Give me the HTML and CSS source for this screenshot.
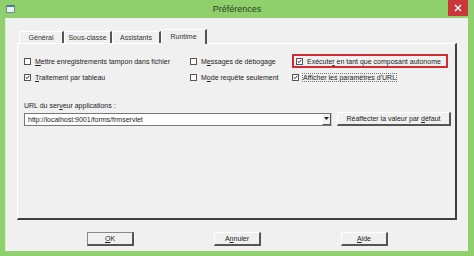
FILE: index.html
```html
<!DOCTYPE html>
<html lang="fr">

<head>
    <meta charset="UTF-8">
    <title>Préférences</title>
    <link rel="stylesheet" href="styles.css">
</head>

<body>

    <div class="window">
        <!-- Title bar -->
        <div class="titlebar">
            <div class="app-icon"></div>
            <div class="title">Préférences</div>
            <div class="close">
                <svg width="8" height="8" viewBox="0 0 8 8"><path d="M1 1L7 7M7 1L1 7" stroke="#fff" stroke-width="1.4"/></svg>
            </div>
        </div>

        <div class="client">
            <!-- Tabs -->
            <div class="tabs">
                <div class="tab tab-general">Général</div>
                <div class="tab tab-sous">Sous-classe</div>
                <div class="tab tab-assist">Assistants</div>
                <div class="tab tab-runtime active">Runtime</div>
            </div>

            <div class="panel">
                <div class="options">
                    <label class="check">
                        <span class="box"></span>
                        <span><u>M</u>ettre enregistrements tampon dans fichier</span>
                    </label>
                    <label class="check">
                        <span class="box"></span>
                        <span>M<u>e</u>ssages de débogage</span>
                    </label>
                    <label class="check highlight">
                        <span class="box checked"><svg width="7" height="7" viewBox="0 0 7 7"><path d="M1 3.2L2.8 5L6 1.2" fill="none" stroke="#111" stroke-width="1.3"/></svg></span>
                        <span>Exécute<u>r</u> en tant que composant autonome</span>
                    </label>

                    <label class="check">
                        <span class="box checked"><svg width="7" height="7" viewBox="0 0 7 7"><path d="M1 3.2L2.8 5L6 1.2" fill="none" stroke="#111" stroke-width="1.3"/></svg></span>
                        <span><u>T</u>raitement par tableau</span>
                    </label>
                    <label class="check">
                        <span class="box"></span>
                        <span>M<u>o</u>de requête seulement</span>
                    </label>
                    <label class="check">
                        <span class="box checked"><svg width="7" height="7" viewBox="0 0 7 7"><path d="M1 3.2L2.8 5L6 1.2" fill="none" stroke="#111" stroke-width="1.3"/></svg></span>
                        <span class="focused">Afficher les <u>p</u>aramètres d'URL</span>
                    </label>
                </div>

                <div class="url-label">URL du ser<u>v</u>eur applications :</div>
                <div class="url-row">
                    <div class="combo">
                        <span class="combo-text">http://localhost:9001/forms/frmservlet</span>
                        <span class="combo-arrow">
                            <svg width="5" height="3" viewBox="0 0 5 3"><path d="M0 0H5L2.5 3Z" fill="#222"/></svg>
                        </span>
                    </div>
                    <button class="btn btn-reset">Réaffecter la valeur par <u>d</u>éfaut</button>
                </div>
            </div>

            <!-- Dialog buttons -->
            <div class="actions">
                <button class="btn btn-dialog"><u>O</u>K</button>
                <button class="btn btn-dialog">A<u>n</u>nuler</button>
                <button class="btn btn-dialog"><u>A</u>ide</button>
            </div>
        </div>
    </div>

</body>

</html>
```

FILE: styles.css
```css
body,
html {
    margin: 0;
    padding: 0;
    background: #8fcf6c;
    font-family: 'Liberation Sans', Arial, sans-serif;
    font-size: 7px;
    color: #222;
}

.window {
    width: 474px;
    height: 256px;
}

.titlebar {
    height: 18px;
    display: grid;
    grid-template-columns: 1fr auto 1fr;
    align-items: start;
}

.app-icon {
    width: 7px;
    height: 5px;
    margin: 5px 0 0 6px;
    background: #e8f0f4;
    border: 1px solid #6f8f9a;
    border-top: 2px solid #4e7d9c;
}

.title {
    font-size: 9px;
    color: #2d3b28;
    padding-top: 4px;
}

.close {
    justify-self: end;
    width: 20px;
    height: 16px;
    margin-right: 6px;
    background: #c9363c;
    display: flex;
    align-items: center;
    justify-content: center;
}

.client {
    margin: 0 6px 0 5px;
    height: 233px;
    background: #f0f0f0;
    border-left: 1px solid #d8ecd0;
    box-sizing: border-box;
    padding: 11px 0 0 11px;
}

.tabs {
    display: flex;
    align-items: flex-end;
    height: 14px;
    margin-left: 2px;
}

.tab {
    height: 12px;
    box-sizing: border-box;
    border-top: 1px solid #fff;
    border-left: 1px solid #fff;
    border-right: 2px solid #555;
    text-align: center;
    line-height: 11px;
    color: #333;
}

.tab-general { width: 45px; }
.tab-sous { width: 48px; }
.tab-assist { width: 49px; }

.tab-runtime {
    width: 46px;
    height: 15px;
    margin-bottom: -1px;
    line-height: 13px;
    background: #f0f0f0;
    position: relative;
}

.panel {
    width: 440px;
    height: 177px;
    box-sizing: border-box;
    border-top: 1px solid #fff;
    border-left: 1px solid #fff;
    border-right: 2px solid #404040;
    border-bottom: 2px solid #404040;
    padding: 9px 0 0 6px;
}

.options {
    display: grid;
    grid-template-columns: 166px 102px 156px;
    grid-auto-rows: 16px;
    align-items: center;
}

.check {
    display: flex;
    align-items: center;
    gap: 4px;
    height: 14px;
    white-space: nowrap;
}

.box {
    width: 7px;
    height: 7px;
    box-sizing: border-box;
    border: 1px solid #555;
    background: #fff;
    display: flex;
    align-items: center;
    justify-content: center;
    flex-shrink: 0;
}

.box svg {
    display: block;
}

.highlight {
    border: 2px solid #d22a33;
    box-sizing: border-box;
    padding-left: 2px;
}

.focused {
    outline: 1px dotted #777;
    outline-offset: 0;
}

.url-label {
    margin-top: 15px;
    height: 11px;
    line-height: 11px;
}

.url-row {
    display: flex;
    align-items: center;
    gap: 5px;
    margin-top: 1px;
}

.combo {
    width: 308px;
    height: 13px;
    box-sizing: border-box;
    border: 1px solid #777;
    border-right-color: #ccc;
    background: #fff;
    display: flex;
    align-items: center;
    justify-content: space-between;
}

.combo-text {
    padding-left: 3px;
}

.combo-arrow {
    width: 9px;
    height: 11px;
    background: #f0f0f0;
    border-left: 1px solid #fff;
    border-right: 1px solid #555;
    border-bottom: 1px solid #555;
    box-sizing: border-box;
    display: flex;
    align-items: center;
    justify-content: center;
}

.btn {
    font-family: inherit;
    font-size: 7px;
    color: #222;
    background: #f0f0f0;
    border: none;
    border-top: 1px solid #fff;
    border-left: 1px solid #fff;
    border-right: 2px solid #555;
    border-bottom: 2px solid #555;
    padding: 0;
    height: 14px;
    line-height: 10px;
}

.btn-reset {
    width: 114px;
}

.actions {
    display: flex;
    gap: 80px;
    margin: 12px 0 0 70px;
}

.btn-dialog {
    width: 47px;
}

.btn-dialog:first-child {
    border-top: 1px solid #888;
    border-left: 1px solid #888;
}
```
